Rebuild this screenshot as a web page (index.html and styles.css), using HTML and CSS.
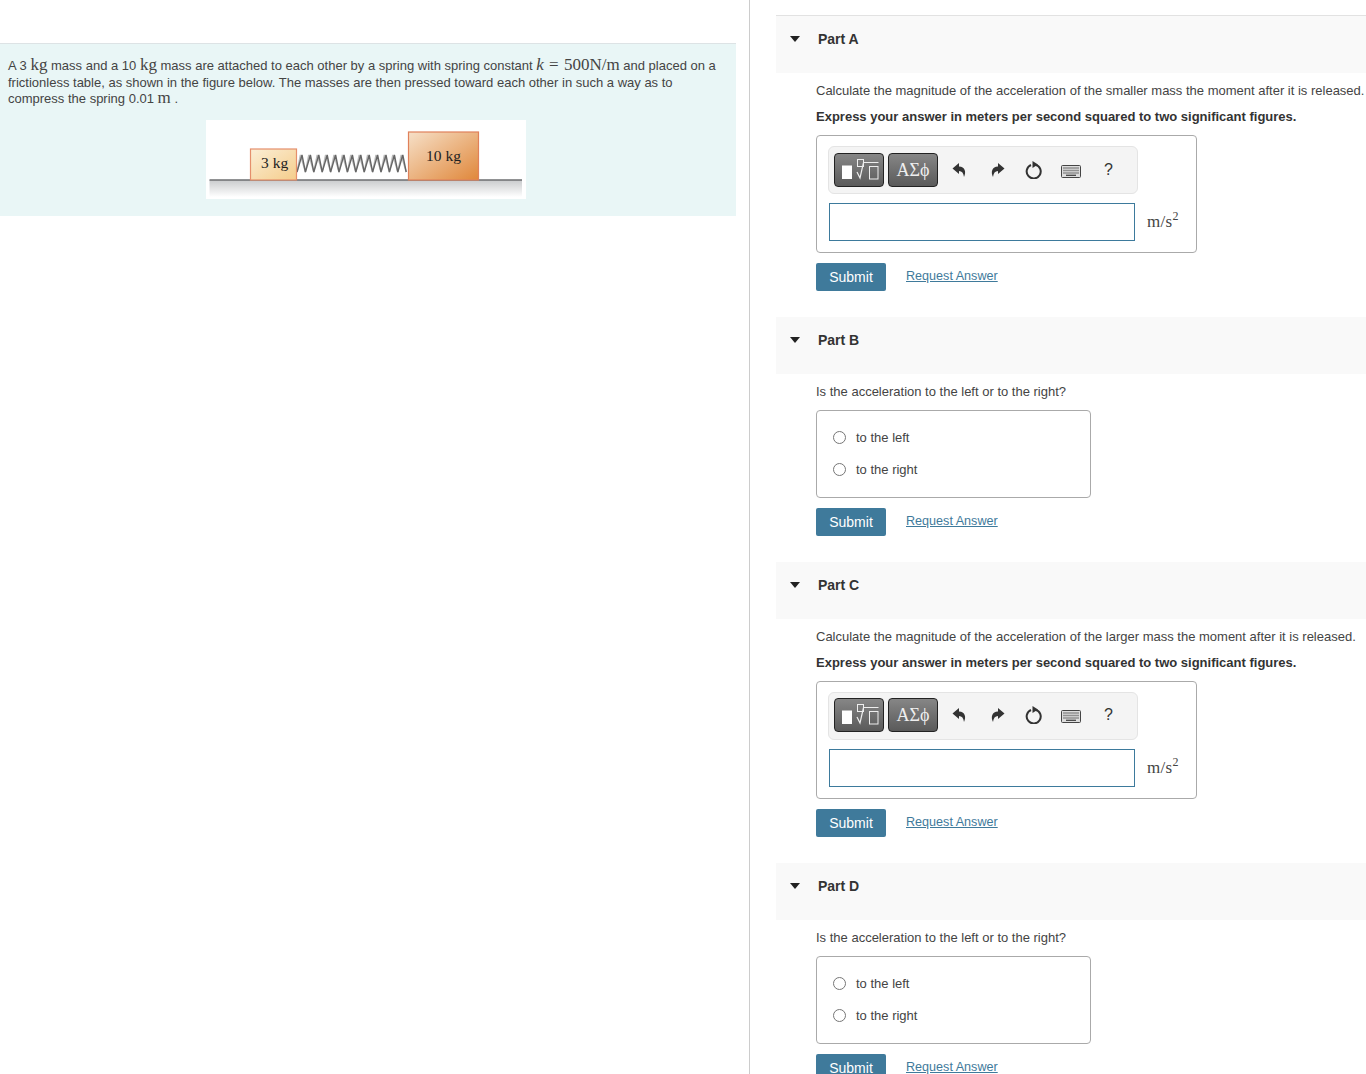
FILE: index.html
```html
<!DOCTYPE html>
<html>
<head>
  <title>Spring and Masses</title>
  <link rel="stylesheet" href="styles.css">
</head>
<body>
  <svg class="defs" width="0" height="0">
    <symbol id="i-template" viewBox="0 0 50 34">
      <rect x="8" y="12.500" width="10" height="13.500" fill="#fff"/>
      <rect x="23.500" y="6.500" width="6" height="7" fill="none" stroke="#eee"/>
      <path d="M23 19l3 6 3.500-15.500h15" fill="none" stroke="#eee" stroke-width="1.200"/>
      <rect x="35.500" y="13.500" width="8.500" height="12.500" fill="none" stroke="#eee"/>
    </symbol>
    <symbol id="i-undo" viewBox="0 0 16 16">
      <path d="M7 1L.5 6.500 7 12V9c3 0 4.500 2 5 6 2.500-5 1-10.500-5-10.500z" fill="#333"/>
    </symbol>
    <symbol id="i-redo" viewBox="0 0 16 16">
      <path d="M9 1l6.500 5.500L9 12V9c-3 0-4.500 2-5 6-2.500-5-1-10.500 5-10.500z" fill="#333"/>
    </symbol>
    <symbol id="i-reset" viewBox="0 0 18 18">
      <path d="M10.500 3.700a7 7 0 1 1-4.500.3" fill="none" stroke="#333" stroke-width="2"/>
      <path d="M7.500 0l5.500 3.500-5.500 3.500z" fill="#333"/>
    </symbol>
    <symbol id="i-keys" viewBox="0 0 20 13">
      <rect x=".5" y=".5" width="19" height="12" rx="1" fill="#ddd" stroke="#444"/>
      <path d="M2.500 3h15M2.500 5.500h15M2.500 8h15" stroke="#444" stroke-width="1.300" stroke-dasharray="1 1"/>
      <path d="M5 10.300h10" stroke="#444" stroke-width="1.300"/>
    </symbol>
  </svg>

  <div class="left">
    <div class="problem">
      <p>A 3 <span class="m">kg</span> mass and a 10 <span class="m">kg</span> mass are attached to each other by a spring with spring constant <span class="m"><i>k</i> <span class="eq">=</span> 500N/m</span> and placed on a frictionless table, as shown in the figure below. The masses are then pressed toward each other in such a way as to compress the spring 0.01 <span class="m">m</span> .</p>
      <svg class="figure" width="320" height="79" viewBox="0 0 320 79">
        <defs>
          <linearGradient id="floor" x1="0" y1="0" x2="0" y2="1">
            <stop offset="0" stop-color="#c9cbcd"/>
            <stop offset="1" stop-color="#fff"/>
          </linearGradient>
          <linearGradient id="small" x1="0" y1="0" x2="1" y2="1">
            <stop offset="0" stop-color="#fbeed6"/>
            <stop offset="1" stop-color="#f5cd8b"/>
          </linearGradient>
          <linearGradient id="big" x1="0" y1="0" x2="1" y2="1">
            <stop offset="0" stop-color="#f6e0c8"/>
            <stop offset="1" stop-color="#e0873a"/>
          </linearGradient>
        </defs>
        <rect x="3.500" y="60" width="312.500" height="17" fill="url(#floor)"/>
        <path d="M3.500 60h312.500" stroke="#6d6e71" stroke-width="1.500"/>
        <path class="coil-back" d="M91 52l3.400-17 5 17 3.400-17 5 17 3.400-17 5 17 3.400-17 5 17 3.400-17 5 17 3.400-17 5 17 3.400-17 5 17 3.400-17 5 17 3.400-17 5 17 3.400-17 5 17 3.400-17 5 17 3.400-17 5 17 3.400-17 5 17"/>
        <path class="coil-front" d="M91 52l5-17 3.400 17 5-17 3.400 17 5-17 3.400 17 5-17 3.400 17 5-17 3.400 17 5-17 3.400 17 5-17 3.400 17 5-17 3.400 17 5-17 3.400 17 5-17 3.400 17 5-17 3.400 17 5-17 3.400 17 5-17 3.400 17"/>
        <rect x="44.500" y="29" width="46" height="31" fill="url(#small)" stroke="#e58f6c" stroke-width="1.200"/>
        <rect x="202.500" y="12" width="70" height="48" fill="url(#big)" stroke="#e0805a" stroke-width="1.200"/>
        <text class="fig-label" x="55" y="48">3 kg</text>
        <text class="fig-label" x="220" y="41">10 kg</text>
      </svg>
    </div>
  </div>

  <div class="right">
    <section class="part part-first">
      <div class="part-head"><span class="caret"></span><h2>Part A</h2></div>
      <div class="part-body">
        <p class="line">Calculate the magnitude of the acceleration of the smaller mass the moment after it is released.</p>
        <p class="line strong">Express your answer in meters per second squared to two significant figures.</p>
        <div class="answer">
          <div class="toolbar">
            <button class="tool-btn"><svg width="50" height="34"><use href="#i-template"/></svg></button>
            <button class="tool-btn greek">ΑΣϕ</button>
            <span class="tool tool-first"><svg width="16" height="16"><use href="#i-undo"/></svg></span>
            <span class="tool"><svg width="16" height="16"><use href="#i-redo"/></svg></span>
            <span class="tool"><svg width="18" height="18"><use href="#i-reset"/></svg></span>
            <span class="tool"><svg class="keys" width="20" height="13"><use href="#i-keys"/></svg></span>
            <span class="tool help">?</span>
          </div>
          <div class="input-row">
            <div class="input"></div>
            <span class="m unit">m/s<sup>2</sup></span>
          </div>
        </div>
        <div class="actions"><button class="submit">Submit</button><a class="req" href="#">Request Answer</a></div>
      </div>
    </section>

    <section class="part">
      <div class="part-head"><span class="caret"></span><h2>Part B</h2></div>
      <div class="part-body">
        <p class="line">Is the acceleration to the left or to the right?</p>
        <div class="choices">
          <label class="choice"><input type="radio" name="b"> to the left</label>
          <label class="choice"><input type="radio" name="b"> to the right</label>
        </div>
        <div class="actions"><button class="submit">Submit</button><a class="req" href="#">Request Answer</a></div>
      </div>
    </section>

    <section class="part">
      <div class="part-head"><span class="caret"></span><h2>Part C</h2></div>
      <div class="part-body">
        <p class="line">Calculate the magnitude of the acceleration of the larger mass the moment after it is released.</p>
        <p class="line strong">Express your answer in meters per second squared to two significant figures.</p>
        <div class="answer">
          <div class="toolbar toolbar-high">
            <button class="tool-btn"><svg width="50" height="34"><use href="#i-template"/></svg></button>
            <button class="tool-btn greek">ΑΣϕ</button>
            <span class="tool tool-first"><svg width="16" height="16"><use href="#i-undo"/></svg></span>
            <span class="tool"><svg width="16" height="16"><use href="#i-redo"/></svg></span>
            <span class="tool"><svg width="18" height="18"><use href="#i-reset"/></svg></span>
            <span class="tool"><svg class="keys" width="20" height="13"><use href="#i-keys"/></svg></span>
            <span class="tool help">?</span>
          </div>
          <div class="input-row">
            <div class="input"></div>
            <span class="m unit">m/s<sup>2</sup></span>
          </div>
        </div>
        <div class="actions"><button class="submit">Submit</button><a class="req" href="#">Request Answer</a></div>
      </div>
    </section>

    <section class="part">
      <div class="part-head"><span class="caret"></span><h2>Part D</h2></div>
      <div class="part-body">
        <p class="line">Is the acceleration to the left or to the right?</p>
        <div class="choices">
          <label class="choice"><input type="radio" name="d"> to the left</label>
          <label class="choice"><input type="radio" name="d"> to the right</label>
        </div>
        <div class="actions"><button class="submit">Submit</button><a class="req" href="#">Request Answer</a></div>
      </div>
    </section>
  </div>
</body>
</html>
```

FILE: styles.css
```css
html, body {
  margin: 0;
  height: 1074px;
  overflow: hidden;
}
body {
  display: flex;
  font-family: "Liberation Sans", Arial, sans-serif;
  font-size: 13px;
  color: #444;
  background-color: #fff;
}
.defs {
  position: absolute;
}

/* left column */
.left {
  width: 749px;
  flex: none;
  padding-top: 43px;
  border-right: 1px solid #ccc;
}
.problem {
  width: 716px;
  height: 158px;
  padding: 14px 12px 0 8px;
  background-color: #e9f6f6;
  border-top: 1px solid #dde3e5;
}
.problem p {
  margin: 0 0 12px;
  line-height: 16.5px;
}
.m {
  font-family: "Liberation Serif", "Times New Roman", serif;
  font-size: 17px;
  line-height: 0;
}
.eq {
  margin: 0 1px;
}
.figure {
  display: block;
  margin: 0 auto;
  background-color: #fff;
}
.fig-label {
  font-family: "Liberation Serif", serif;
  font-size: 15.500px;
  fill: #222;
}
.coil-back {
  fill: none;
  stroke: #bbb;
  stroke-width: 1.400;
}
.coil-front {
  fill: none;
  stroke: #666;
  stroke-width: 1.400;
}

/* right column */
.right {
  flex: 1;
  min-width: 0;
  padding: 15px 0 0 26px;
}
.part {
  margin-bottom: 26px;
}
.part-head {
  display: flex;
  align-items: center;
  height: 45px;
  padding-bottom: 12px;
  background-color: #f9f9f9;
}
.part-first .part-head {
  border-top: 1px solid #e2e2e2;
}
.caret {
  width: 0;
  height: 0;
  margin: 0 18px 0 14px;
  border-left: 5.500px solid transparent;
  border-right: 5.500px solid transparent;
  border-top: 6px solid #222;
}
.part-head h2 {
  margin: 0;
  font-size: 14px;
  font-weight: bold;
  color: #333;
}
.part-body {
  padding: 9px 0 0 40px;
}
.line {
  margin: 0 0 8px;
  line-height: 18px;
  white-space: nowrap;
}
.strong {
  font-weight: bold;
  color: #333;
}

/* answer box */
.answer {
  width: 379px;
  height: 116px;
  margin-top: 9px;
  border: 1px solid #aaa;
  border-radius: 4px;
}
.toolbar {
  display: flex;
  align-items: center;
  width: 303px;
  height: 46px;
  margin: 10px 0 0 11px;
  padding-left: 5px;
  background-color: #f4f4f4;
  border: 1px solid #e4e4e4;
  border-radius: 6px;
}
.toolbar-high {
  height: 44px;
  padding-bottom: 2px;
}
.tool-btn {
  width: 50px;
  height: 34px;
  margin-right: 4px;
  padding: 0;
  color: #eee;
  background: linear-gradient(#868686, #5a5a5a);
  border: 1px solid #222;
  border-radius: 4px;
}
.tool-btn svg {
  display: block;
  margin: -1px;
}
.greek {
  font-family: "Liberation Serif", serif;
  font-size: 18px;
}
.tool {
  display: flex;
  align-items: center;
  justify-content: center;
  width: 37.200px;
  height: 34px;
  color: #333;
}
.tool-first {
  margin-left: -1px;
}
.keys {
  margin-top: 3px;
}
.help {
  font-size: 16px;
}
.input-row {
  display: flex;
  align-items: center;
  margin: 9px 0 0 12px;
}
.input {
  width: 304px;
  height: 36px;
  border: 1px solid #3d7a9c;
  background-color: #fff;
}
.unit {
  margin-left: 12px;
  color: #444;
  line-height: normal;
  letter-spacing: .3px;
}
.unit sup {
  font-size: 12px;
  line-height: 0;
}

/* radio box */
.choices {
  width: 273px;
  height: 76px;
  margin-top: 9px;
  padding-top: 10px;
  border: 1px solid #aaa;
  border-radius: 4px;
}
.choice {
  display: flex;
  align-items: center;
  gap: 10px;
  height: 32px;
  padding-left: 16px;
}
.choice input {
  margin: 0;
  width: 13px;
  height: 13px;
}

/* buttons */
.actions {
  display: flex;
  align-items: center;
  gap: 20px;
  margin-top: 10px;
}
.submit {
  width: 70px;
  height: 28px;
  padding: 0;
  font-family: "Liberation Sans", Arial, sans-serif;
  font-size: 14px;
  color: #fff;
  background-color: #3f7a9b;
  border: none;
  border-radius: 2px;
}
.req {
  margin-bottom: 3px;
  font-size: 12.600px;
  color: #3f7a9b;
}
```
